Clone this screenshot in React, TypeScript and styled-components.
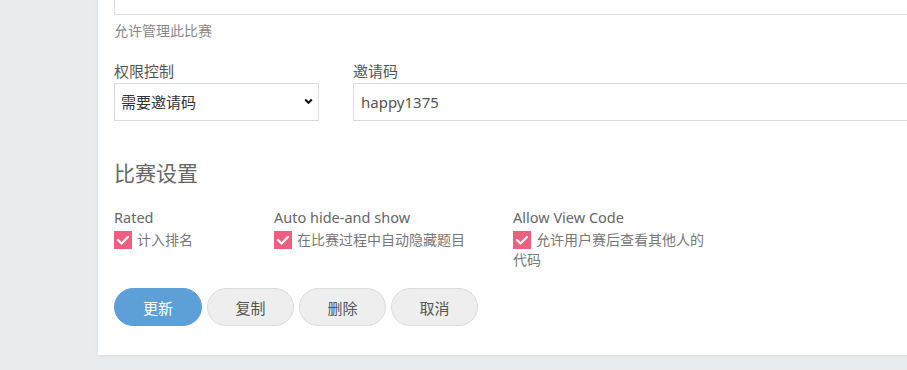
import React from "react";
import styled, { createGlobalStyle } from "styled-components";

const GlobalStyle = createGlobalStyle`
  html, body {
    margin: 0;
    padding: 0;
    background: #e9edf0;
    font-family: "Noto Sans", "Noto Sans CJK SC", sans-serif;
  }
  * { box-sizing: border-box; }
`;

const Page = styled.div`
  height: 370px;
  overflow: hidden;
  padding-left: 98px;
`;

const Card = styled.div`
  width: 900px;
  margin-top: -39px;
  background: #fff;
  padding: 16px 0 29px 16px;
  box-shadow: 0 1px 4px rgba(0, 0, 0, 0.08);
`;

const TextBox = styled.input`
  display: block;
  width: 100%;
  height: 38px;
  border: 1px solid #dcdcdc;
  background: #fff;
  padding: 0 7px;
  font-family: inherit;
  font-size: 15px;
  color: #555;
  outline: none;
`;

const HelpText = styled.div`
  margin-top: 6px;
  font-size: 14px;
  line-height: 20px;
  color: #888;
`;

const FieldRow = styled.div`
  display: grid;
  grid-template-columns: 205px 1fr;
  column-gap: 34px;
  margin-top: 20px;
`;

const Field = styled.div`
  display: flex;
  flex-direction: column;
`;

const Label = styled.label`
  font-size: 15px;
  line-height: 20px;
  color: #555;
  margin-bottom: 2px;
`;

const SelectWrap = styled.div`
  position: relative;
`;

const Select = styled.select`
  display: block;
  width: 100%;
  height: 38px;
  border: 1px solid #dcdcdc;
  background: #fff;
  padding: 0 6px;
  font-family: inherit;
  font-size: 15px;
  color: #333;
  appearance: none;
  -webkit-appearance: none;
  outline: none;
`;

const Chevron = styled.svg`
  position: absolute;
  right: 6px;
  top: 15px;
  pointer-events: none;
`;

const SectionTitle = styled.h2`
  margin: 38px 0 0;
  font-size: 21px;
  line-height: 28px;
  font-weight: 400;
  color: #666;
`;

const OptionsRow = styled.div`
  display: grid;
  grid-template-columns: 160px 239px 200px;
  margin-top: 20px;
`;

const Option = styled.div`
  display: flex;
  flex-direction: column;
`;

const OptionTitle = styled.div`
  font-size: 14.5px;
  line-height: 20px;
  color: #666;
`;

const CheckLabel = styled.div`
  margin-top: 3px;
  font-size: 14px;
  line-height: 20px;
  color: #777;
`;

const CheckBox = styled.span`
  display: inline-flex;
  vertical-align: top;
  width: 18px;
  height: 18px;
  margin: 1px 5px 0 0;
  background: #ec5f80;
  align-items: center;
  justify-content: center;
`;

const ButtonRow = styled.div`
  display: flex;
  gap: 5px;
  margin-top: 18px;
`;

const Button = styled.button<{ $primary?: boolean }>`
  height: 38px;
  width: ${(p) => (p.$primary ? "88px" : "87px")};
  border-radius: 19px;
  border: 1px solid ${(p) => (p.$primary ? "#5d9fd7" : "#dcdcdc")};
  background: ${(p) => (p.$primary ? "#5d9fd7" : "#eeeeee")};
  color: ${(p) => (p.$primary ? "#fff" : "#555")};
  font-family: inherit;
  font-size: 15px;
  padding: 0;
  cursor: pointer;
`;

const Check = () => (
  <CheckBox>
    <svg width="18" height="18" viewBox="0 0 18 18">
      <path d="M4 9 L7.5 12.5 L14 6" fill="none" stroke="#fff" strokeWidth="2.2" strokeLinecap="round" strokeLinejoin="round" />
    </svg>
  </CheckBox>
);

export default function App() {
  return (
    <>
      <GlobalStyle />
      <Page>
        <Card>
          <TextBox readOnly value="" />
          <HelpText>允许管理此比赛</HelpText>
          <FieldRow>
            <Field>
              <Label>权限控制</Label>
              <SelectWrap>
                <Select defaultValue="invite">
                  <option value="invite">需要邀请码</option>
                  <option value="public">公开</option>
                </Select>
                <Chevron width="9" height="7" viewBox="0 0 9 7">
                  <path d="M1.2 1.5 L4.5 4.8 L7.8 1.5" fill="none" stroke="#111" strokeWidth="2" />
                </Chevron>
              </SelectWrap>
            </Field>
            <Field>
              <Label>邀请码</Label>
              <TextBox readOnly value="happy1375" />
            </Field>
          </FieldRow>
          <SectionTitle>比赛设置</SectionTitle>
          <OptionsRow>
            <Option>
              <OptionTitle>Rated</OptionTitle>
              <CheckLabel>
                <Check />
                计入排名
              </CheckLabel>
            </Option>
            <Option>
              <OptionTitle>Auto hide-and show</OptionTitle>
              <CheckLabel>
                <Check />
                在比赛过程中自动隐藏题目
              </CheckLabel>
            </Option>
            <Option>
              <OptionTitle>Allow View Code</OptionTitle>
              <CheckLabel>
                <Check />
                允许用户赛后查看其他人的代码
              </CheckLabel>
            </Option>
          </OptionsRow>
          <ButtonRow>
            <Button $primary>更新</Button>
            <Button>复制</Button>
            <Button>删除</Button>
            <Button>取消</Button>
          </ButtonRow>
        </Card>
      </Page>
    </>
  );
}
